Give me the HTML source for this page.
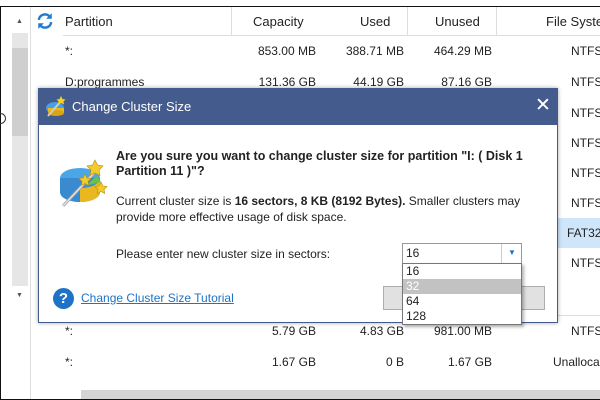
<!DOCTYPE html>
<html><head><meta charset="utf-8"><style>
*{margin:0;padding:0;box-sizing:border-box}
body{width:600px;height:400px;overflow:hidden;background:#fff;font-family:"Liberation Sans",sans-serif;font-size:12px;color:#222;position:relative}
.a{position:absolute;white-space:nowrap}
.r{text-align:right}
</style></head><body>
<div class="a" style="left:0;top:6px;width:600px;height:394px;border:1px solid #111;border-right:none"></div>
<div class="a" style="left:30px;top:7px;width:1px;height:392px;background:#ddd"></div>
<!-- vertical scrollbar -->
<div class="a" style="left:12px;top:33px;width:16px;height:253px;background:#e6e6e6"></div>
<div class="a" style="left:12px;top:48px;width:16px;height:88px;background:#cfcfcf"></div>
<div class="a" style="left:16px;top:18px;font-size:7px;color:#555">▲</div>
<div class="a" style="left:16px;top:292px;font-size:7px;color:#555">▼</div>
<div class="a" style="left:-5px;top:113px;width:11px;height:11px;border:1px solid #333;border-radius:50%"></div>
<!-- header -->
<svg class="a" style="left:36px;top:12px" width="18" height="18" viewBox="0 0 16 16"><path d="M2.5 7A5.5 5.5 0 0 1 12.5 4.5M13.5 9A5.5 5.5 0 0 1 3.5 11.5" fill="none" stroke="#1e7bd1" stroke-width="2.2"/><path d="M14 1v5h-5z M2 15v-5h5z" fill="#1e7bd1"/></svg>
<div class="a" style="left:65px;top:14px;font-size:13px">Partition</div>
<div class="a" style="left:231px;top:7px;width:1px;height:28px;background:#ddd"></div>
<div class="a" style="left:407px;top:7px;width:1px;height:28px;background:#ddd"></div>
<div class="a" style="left:496px;top:7px;width:1px;height:28px;background:#ddd"></div>
<div class="a" style="left:63px;top:35px;width:537px;height:1px;background:#ddd"></div>
<div class="a" style="left:253px;top:14px;font-size:13px">Capacity</div>
<div class="a" style="left:360px;top:14px;font-size:13px">Used</div>
<div class="a" style="left:435px;top:14px;font-size:13px">Unused</div>
<div class="a" style="left:546px;top:14px;font-size:13px">File System</div>
<!-- rows -->
<div class="a" style="left:558px;top:218px;width:42px;height:30px;background:#cfe5fa"></div>
<div class="a" style="left:65px;top:44px">*:</div>
<div class="a r" style="left:216px;width:100px;top:44px">853.00 MB</div>
<div class="a r" style="left:304px;width:100px;top:44px">388.71 MB</div>
<div class="a r" style="left:392px;width:100px;top:44px">464.29 MB</div>
<div class="a" style="left:571px;top:44px">NTFS</div>
<div class="a" style="left:65px;top:75px">D:programmes</div>
<div class="a r" style="left:216px;width:100px;top:75px">131.36 GB</div>
<div class="a r" style="left:304px;width:100px;top:75px">44.19 GB</div>
<div class="a r" style="left:392px;width:100px;top:75px">87.16 GB</div>
<div class="a" style="left:571px;top:75px">NTFS</div>
<div class="a" style="left:571px;top:106px">NTFS</div>
<div class="a" style="left:571px;top:136px">NTFS</div>
<div class="a" style="left:571px;top:166px">NTFS</div>
<div class="a" style="left:571px;top:196px">NTFS</div>
<div class="a" style="left:567px;top:226px">FAT32</div>
<div class="a" style="left:571px;top:256px">NTFS</div>
<div class="a" style="left:63px;top:315px;width:537px;height:1px;background:#ddd"></div>
<div class="a" style="left:65px;top:324px">*:</div>
<div class="a r" style="left:216px;width:100px;top:324px">5.79 GB</div>
<div class="a r" style="left:304px;width:100px;top:324px">4.83 GB</div>
<div class="a r" style="left:392px;width:100px;top:324px">981.00 MB</div>
<div class="a" style="left:571px;top:324px">NTFS</div>
<div class="a" style="left:65px;top:355px">*:</div>
<div class="a r" style="left:216px;width:100px;top:355px">1.67 GB</div>
<div class="a r" style="left:304px;width:100px;top:355px">0 B</div>
<div class="a r" style="left:392px;width:100px;top:355px">1.67 GB</div>
<div class="a" style="left:553px;top:355px">Unallocated</div>
<div class="a" style="left:81px;top:390px;width:519px;height:9px;background:#d4d4d4"></div>
<!-- dialog -->
<div class="a" style="left:38px;top:88px;width:520px;height:235px;background:#fff;border:1px solid #435b8d;box-shadow:0 0 4px rgba(0,0,0,.35)"></div>
<div class="a" style="left:38px;top:88px;width:520px;height:37px;background:#435b8d"></div>
<svg class="a" style="left:44px;top:94px" width="24" height="24" viewBox="0 0 24 24"><ellipse cx="11" cy="14" rx="9" ry="6" fill="#4a9fe0"/><path d="M4 14h16v5H4z" fill="#e8b820"/><ellipse cx="12" cy="19" rx="8" ry="3" fill="#d9a510"/><path d="M4 22L18 6" stroke="#ccc" stroke-width="2"/><path d="M17 2l1.5 3 3 .5-2 2 .5 3-3-1.5-3 1.5.5-3-2-2 3-.5z" fill="#f5d020"/></svg>
<div class="a" style="left:72px;top:99px;color:#fff;font-size:13px">Change Cluster Size</div>
<div class="a" style="left:535px;top:94px;color:#fff;font-size:19px">✕</div>
<svg class="a" style="left:55px;top:156px" width="56" height="58" viewBox="0 0 56 58"><ellipse cx="25" cy="22" rx="20" ry="10" fill="#4aa6e6"/><path d="M5 22v14c0 6 9 10 20 10s20-4 20-10V22" fill="#3a8ad0"/><path d="M25 32v14c11 0 20-4 20-10V22c0 6-9 10-20 10z" fill="#e9b820"/><path d="M30 30l12-10 4 6z" fill="#67c24a"/><path d="M8 50L40 16" stroke="#aaa" stroke-width="3"/><path d="M8 50L40 16" stroke="#eee" stroke-width="1"/><path d="M40 4l2.5 5 5.5 1-4 4 1 5.5-5-2.5-5 2.5 1-5.5-4-4 5.5-1z M46 26l2 4 4 .5-3 3 .7 4-3.7-2-3.7 2 .7-4-3-3 4-.5z M30 18l2 4 4 .5-3 3 .7 4-3.7-2-3.7 2 .7-4-3-3 4-.5z" fill="#f3cc2a" stroke="#b58a10" stroke-width=".6"/></svg>
<div class="a" style="left:116px;top:149px;font-weight:bold;font-size:12.5px;line-height:15px">Are you sure you want to change cluster size for partition "I: ( Disk 1<br>Partition 11 )"?</div>
<div class="a" style="left:116px;top:193px;font-size:12px;line-height:16px">Current cluster size is <b>16 sectors, 8 KB (8192 Bytes).</b> Smaller clusters may<br>provide more effective usage of disk space.</div>
<div class="a" style="left:116px;top:247px">Please enter new cluster size in sectors:</div>
<div class="a" style="left:383px;top:286px;width:162px;height:24px;background:#e1e1e1;border:1px solid #adadad"></div>
<div class="a" style="left:402px;top:243px;width:120px;height:21px;border:1px solid #999;background:#fff"></div>
<div class="a" style="left:501px;top:244px;width:1px;height:19px;background:#ccc"></div>
<div class="a" style="left:406px;top:246px">16</div>
<div class="a" style="left:508px;top:248px;font-size:8px;color:#1e73c8">▼</div>
<div class="a" style="left:402px;top:263px;width:120px;height:62px;border:1px solid #777;background:#fff;box-shadow:2px 2px 3px rgba(0,0,0,.3)"></div>
<div class="a" style="left:403px;top:279px;width:118px;height:15px;background:#c2c2c2"></div>
<div class="a" style="left:406px;top:264px;line-height:15px">16<br><span style="color:#fff">32</span><br>64<br>128</div>
<div class="a" style="left:53px;top:288px;width:21px;height:21px;border-radius:50%;background:#1e73c8;color:#fff;font-weight:bold;font-size:15px;text-align:center;line-height:21px">?</div>
<div class="a" style="left:81px;top:291px;color:#1e73c8;text-decoration:underline">Change Cluster Size Tutorial</div>
</body></html>
